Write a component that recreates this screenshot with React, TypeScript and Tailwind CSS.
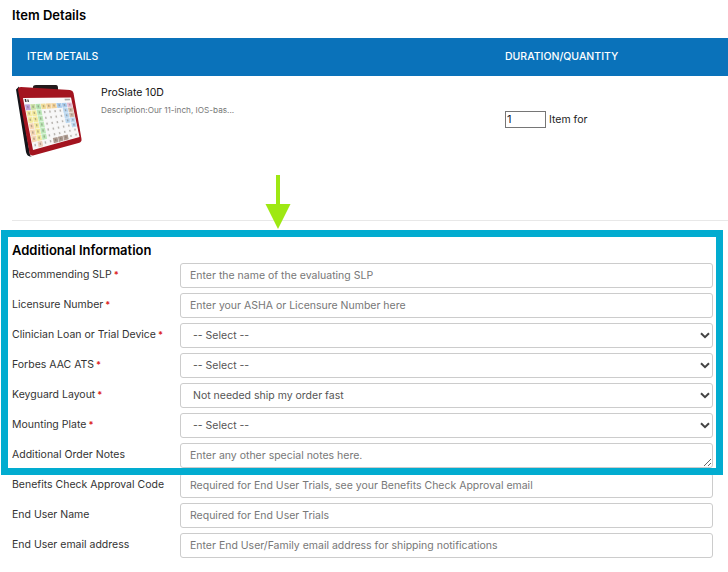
import { ChangeEvent, useState } from "react";

const font = "font-['Inter',sans-serif]";

const keyColors = [
  "#bda3dc", "#c9dfa4", "#b5e3b2", "#f0dc98", "#f3d298", "#f3d298", "#a9cbec", "#a9cbec", "#e6bcd2",
  "#f4ea9f", "#f4ea9f", "#bce8b8", "#f6f6f6", "#f6f6f6", "#f6f6f6", "#f6f6f6", "#bcd8f0", "#d0bcaa",
  "#f4ea9f", "#f4ea9f", "#bce8b8", "#f6f6f6", "#f6f6f6", "#f6f6f6", "#f6f6f6", "#bcd8f0", "#d0bcaa",
  "#f6d6b4", "#f4ea9f", "#bce8b8", "#f6f6f6", "#f6f6f6", "#f6f6f6", "#f6f6f6", "#bcd8f0", "#bcd8f0",
  "#f6d6b4", "#f4ea9f", "#bce8b8", "#f6f6f6", "#f6f6f6", "#f6f6f6", "#f6f6f6", "#f6f6f6", "#bcd8f0",
  "#f6d6b4", "#f4ea9f", "#bce8b8", "#f6f6f6", "#f6f6f6", "#f6f6f6", "#f6f6f6", "#f6f6f6", "#f6f6f6",
  "#f6f6f6", "#ecd0bc", "#f6f6f6", "#f6f6f6", "#ac9a90", "#ac9a90", "#ac9a90", "#f6f6f6", "#f6f6f6",
];

// screen corners of the tablet photo, so the keys follow its tilt
const TL = [8, 14];
const TR = [56, 13.5];
const BR = [64.5, 53];
const BL = [18, 66];

function pt(u: number, v: number) {
  const x = (1 - v) * ((1 - u) * TL[0] + u * TR[0]) + v * ((1 - u) * BL[0] + u * BR[0]);
  const y = (1 - v) * ((1 - u) * TL[1] + u * TR[1]) + v * ((1 - u) * BL[1] + u * BR[1]);
  return `${x.toFixed(2)},${y.toFixed(2)}`;
}

function quad(u0: number, v0: number, u1: number, v1: number) {
  return `${pt(u0, v0)} ${pt(u1, v0)} ${pt(u1, v1)} ${pt(u0, v1)}`;
}

function Tablet() {
  return (
    <svg width="68" height="74" viewBox="0 0 68 74" className="shrink-0">
      <path d="M18 3 Q18 1 21 1 H41 Q43 1 43 4 V6 H18 Z" fill="#231a1c" />
      <path d="M1 5.5 L4 2.5 L15 71 Q15.5 73 19 72.5 L15 72.5 Q12 72 11 68 Z" fill="#15151a" />
      <path d="M3 5.5 Q3 3 6 3 L55 6 Q58 6.5 58.5 9 L66.5 55 Q67 58 63.5 59 L18 71.5 Q15 72 14.5 69 Z" fill="#a3141f" />
      <polygon points={quad(0, 0, 1, 1)} fill="#fafafa" />
      <polygon points={quad(0.03, 0.02, 0.06, 0.08)} fill="#333" />
      <polygon points={quad(0.08, 0.03, 0.11, 0.08)} fill="#555" />
      <polygon points={quad(0.86, 0.03, 0.97, 0.07)} fill="#aaa" />
      {keyColors.map((color, i) => {
        const c = i % 9;
        const r = Math.floor(i / 9);
        const u = 0.015 + c * 0.1095;
        const v = 0.125 + r * 0.124;
        return (
          <g key={i}>
            <polygon points={quad(u, v, u + 0.1, v + 0.113)} fill={color} />
            <polygon points={quad(u + 0.035, v + 0.03, u + 0.065, v + 0.075)} fill="#6b6458" opacity="0.45" />
          </g>
        );
      })}
    </svg>
  );
}

function Chevron() {
  return (
    <svg width="10" height="7" viewBox="0 0 10 7" className="absolute right-[3px] top-[9px] pointer-events-none">
      <path d="M1 1.2 L5 5.2 L9 1.2" fill="none" stroke="#444" strokeWidth="2" />
    </svg>
  );
}

function Label({ text, required }: { text: string; required?: boolean }) {
  return (
    <label className="w-[168px] shrink-0 text-[10.5px] leading-[24px] text-[#333]">
      {text}
      {required && <span className="ml-[2px] text-[9px] font-bold text-[#dc2626]">*</span>}
    </label>
  );
}

const boxClass =
  "w-full h-[25px] border border-[#cccccc] rounded-[3px] bg-white text-[10.5px] outline-none block";

function TextRow({ label, placeholder, required }: { label: string; placeholder: string; required?: boolean }) {
  return (
    <div className="flex h-[30px]">
      <Label text={label} required={required} />
      <input
        className={`${boxClass} px-[9px] placeholder:text-[#777] ${font}`}
        placeholder={placeholder}
      />
    </div>
  );
}

function SelectRow({ label, value, required }: { label: string; value: string; required?: boolean }) {
  const [current, setCurrent] = useState(value);
  return (
    <div className="flex h-[30px]">
      <Label text={label} required={required} />
      <div className="relative w-full h-[25px]">
        <select
          value={current}
          onChange={(e: ChangeEvent<HTMLSelectElement>) => setCurrent(e.target.value)}
          className={`${boxClass} appearance-none pl-[12px] text-[#555] ${font}`}
        >
          <option>-- Select --</option>
          <option>Not needed ship my order fast</option>
        </select>
        <Chevron />
      </div>
    </div>
  );
}

export default function App() {
  return (
    <div className={`relative w-[728px] h-[572px] overflow-hidden bg-white ${font}`}>
      <div className="pl-[12px]">
        <h2 className="pt-[7px] h-[38px] text-[13px] leading-[17px] font-semibold text-black">Item Details</h2>

        {/* table */}
        <div className="flex items-center h-[38px] bg-[#0a72ba] text-white text-[10.5px] font-medium">
          <div className="w-[493px] pl-[15px]">ITEM DETAILS</div>
          <div>DURATION/QUANTITY</div>
        </div>
        <div className="flex h-[145px] border-b border-[#e8e8e8]">
          <div className="w-[89px] pl-[3px] pt-[8px]">
            <Tablet />
          </div>
          <div className="w-[404px] pt-[9px]">
            <div className="text-[10.5px] leading-[15px] text-[#111]">ProSlate 10D</div>
            <div className="mt-[4px] text-[8.2px] leading-[12px] text-[#777]">
              Description:Our 11-inch, IOS-bas...
            </div>
          </div>
          <div className="flex items-start pt-[35px]">
            <input
              defaultValue="1"
              className="w-[41px] h-[17px] border border-[#767676] pl-[1px] pb-[2px] text-[11px] leading-[11px] text-[#123] outline-none"
            />
            <span className="ml-[3px] text-[10.5px] leading-[17px] text-[#222]">Item for</span>
          </div>
        </div>

        {/* additional info form */}
        <div className="pr-[15px] pt-[20px]">
          <h3 className="h-[22px] text-[13px] leading-[19px] font-semibold text-black">Additional Information</h3>
          <TextRow label="Recommending SLP" placeholder="Enter the name of the evaluating SLP" required />
          <TextRow label="Licensure Number" placeholder="Enter your ASHA or Licensure Number here" required />
          <SelectRow label="Clinician Loan or Trial Device" value="-- Select --" required />
          <SelectRow label="Forbes AAC ATS" value="-- Select --" required />
          <SelectRow label="Keyguard Layout" value="Not needed ship my order fast" required />
          <SelectRow label="Mounting Plate" value="-- Select --" required />
          <div className="flex h-[30px]">
            <Label text="Additional Order Notes" />
            <textarea
              className={`${boxClass} px-[9px] py-[4px] leading-[15px] placeholder:text-[#777] ${font}`}
              placeholder="Enter any other special notes here."
            />
          </div>
          <TextRow label="Benefits Check Approval Code" placeholder="Required for End User Trials, see your Benefits Check Approval email" />
          <TextRow label="End User Name" placeholder="Required for End User Trials" />
          <TextRow label="End User email address" placeholder="Enter End User/Family email address for shipping notifications" />
        </div>
      </div>

      {/* annotation overlays */}
      <svg width="26" height="55" viewBox="0 0 26 55" className="absolute left-[265px] top-[175px]">
        <path d="M11 0 H15 V29 H25.5 L13 54 L0.5 29 H11 Z" fill="#9ee813" />
      </svg>
      <div className="absolute left-[1px] top-[230px] w-[722px] h-[245px] border-[7px] border-[#02acd0] pointer-events-none" />
    </div>
  );
}
